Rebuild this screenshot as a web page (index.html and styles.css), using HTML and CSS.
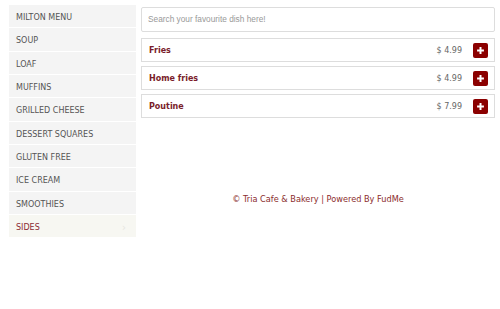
FILE: index.html
```html
<!DOCTYPE html>
<html>
<head>
<meta charset="utf-8">
<link rel="stylesheet" href="styles.css">
</head>
<body>
<div class="page">
  <ul class="menu">
    <li class="menu-item">MILTON MENU</li>
    <li class="menu-item">SOUP</li>
    <li class="menu-item">LOAF</li>
    <li class="menu-item">MUFFINS</li>
    <li class="menu-item">GRILLED CHEESE</li>
    <li class="menu-item">DESSERT SQUARES</li>
    <li class="menu-item">GLUTEN FREE</li>
    <li class="menu-item">ICE CREAM</li>
    <li class="menu-item">SMOOTHIES</li>
    <li class="menu-item active">SIDES<span class="arrow">›</span></li>
  </ul>
  <div class="main">
    <div class="search">Search your favourite dish here!</div>
    <div class="dish"><span class="name">Fries</span><span class="price">$ 4.99</span><span class="add"><svg viewBox="0 0 10 10" width="9" height="9"><path d="M5 1.2V8.8M1.2 5H8.8" stroke="#fff" stroke-width="2.2"/></svg></span></div>
    <div class="dish"><span class="name">Home fries</span><span class="price">$ 4.99</span><span class="add"><svg viewBox="0 0 10 10" width="9" height="9"><path d="M5 1.2V8.8M1.2 5H8.8" stroke="#fff" stroke-width="2.2"/></svg></span></div>
    <div class="dish"><span class="name">Poutine</span><span class="price">$ 7.99</span><span class="add"><svg viewBox="0 0 10 10" width="9" height="9"><path d="M5 1.2V8.8M1.2 5H8.8" stroke="#fff" stroke-width="2.2"/></svg></span></div>
    <div class="footer">© Tria Cafe &amp; Bakery | Powered By FudMe</div>
  </div>
</div>
</body>
</html>
```
FILE: styles.css
```css
html, body { margin: 0; padding: 0; background: #fff; }
body { font-family: "DejaVu Sans", Verdana, sans-serif; font-size: 8px; }
.page { display: flex; gap: 5px; padding: 5px 5px 0 9px; align-items: flex-start; }
.menu { list-style: none; margin: 0; padding: 0; width: 127px; flex: none; display: flex; flex-direction: column; gap: 1px; }
.menu-item { background: #f4f4f4; color: #555; height: 22.33px; box-sizing: border-box; padding: 3px 10px 0 7px; line-height: 19.33px; display: flex; justify-content: space-between; }
.menu-item.active { background: #f7f7f2; color: #8b2a33; }
.arrow { color: #e6e6e0; font-size: 10px; }
.main { flex: 1; display: flex; flex-direction: column; gap: 4px; padding-top: 2px; }
.search { height: 25px; border: 1px solid #ddd; box-sizing: border-box; line-height: 23px; padding-left: 6px; color: #999; border-radius: 2px; margin-bottom: 2px; font-family: "Liberation Sans", Arial, sans-serif; font-size: 8.3px; }
.dish { height: 24px; border: 1px solid #ddd; box-sizing: border-box; display: flex; align-items: center; padding: 1px 6px 0 7px; }
.name { font-weight: bold; color: #7a1d2a; flex: 1; }
.price { color: #666; margin-right: 11px; }
.add { width: 15px; height: 15px; background: #8b0000; border-radius: 2px; display: flex; align-items: center; justify-content: center; margin-top: -1px; }
.add svg { display: block; }
.footer { text-align: center; color: #8b2c2c; margin-top: 72px; font-size: 8.2px; }
```
